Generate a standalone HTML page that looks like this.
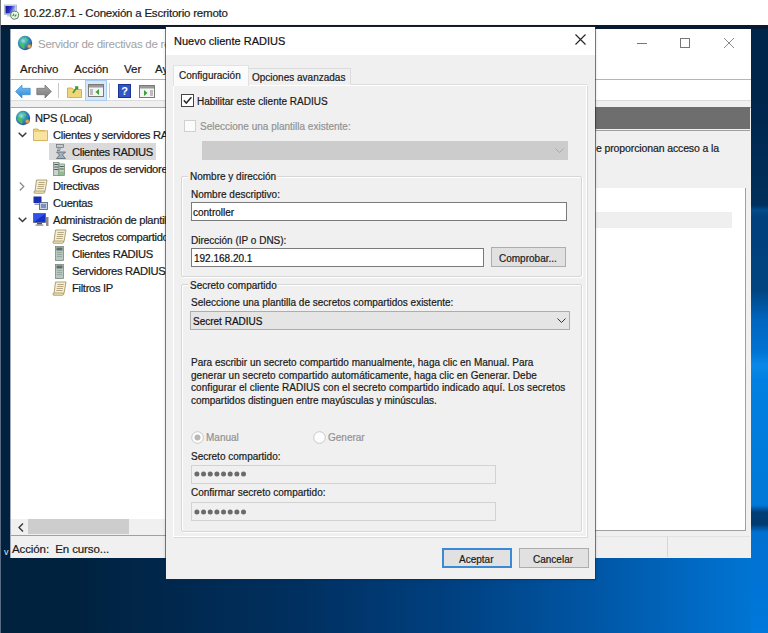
<!DOCTYPE html>
<html><head><meta charset="utf-8">
<style>
*{margin:0;padding:0;box-sizing:border-box}
html,body{width:768px;height:633px;overflow:hidden}
body{position:relative;font-family:"Liberation Sans",sans-serif;color:#000;background:#06234a}
.a{position:absolute}
.t{position:absolute;white-space:nowrap;line-height:12px;font-size:10px;color:#1a1a1a;-webkit-text-stroke-width:0.2px}
.m{font-size:11.2px;letter-spacing:-0.32px;color:#1a1a1a}
#desk1{left:0;top:25px;width:768px;height:608px;
 background:linear-gradient(90deg,#00223f 0%,#00223f 10%,#003060 39%,#004080 58.6%,#0058a8 78.8%,#0078d8 100%)}
#deskR{left:751px;top:25px;width:17px;height:608px;
 background:linear-gradient(180deg,#00264c 0%,#00264c 12.3%,#00305c 29.6%,#004c8c 30.4%,#00407c 31.7%,#004480 43.6%,#0066c0 48.5%,#0072d2 53.5%,#0a88e8 55.9%,#0080e2 58.4%,#0078d8 79%,#003e78 80.1%,#003a70 82.1%,#0070d0 83.4%,#0078dc 100%)}
#topbar{left:0;top:0;width:768px;height:25px;background:#fff;border-left:1px solid #7a7a7a}
#topline{left:0;top:25px;width:768px;height:4px;background:#081a33}
#mmc{left:10px;top:29px;width:741px;height:529px;background:#f0f0f0}
</style></head><body>
<div id="desk1" class="a"></div>
<div id="deskR" class="a"></div>
<div id="topbar" class="a">
  <svg class="a" style="left:0;top:0" width="21" height="22" viewBox="0 0 21 22">
    <defs><linearGradient id="rs" x1="0" y1="0" x2="1" y2="0.3"><stop offset="0" stop-color="#0c0c9a"/><stop offset="0.55" stop-color="#2a36c8"/><stop offset="1" stop-color="#b9c2f2"/></linearGradient></defs>
    <rect x="3.5" y="5" width="12" height="9.5" fill="#d6dbe8" stroke="#a8b0c4" stroke-width="0.8"/>
    <rect x="4.5" y="6" width="10" height="7.5" fill="url(#rs)"/>
    <rect x="6" y="14.5" width="5" height="2" fill="#c4c8d4"/>
    <circle cx="13.7" cy="15.2" r="4" fill="#eaf5e4" stroke="#5f7f5f" stroke-width="1"/>
    <path d="M11.6 15.9 l1.4 -1.4 M13.6 16.4 l1.8 -1.8 M12.2 14.4 h1 M14.6 16.2 h-1" stroke="#2f8f2f" stroke-width="1.1"/>
  </svg>
  <div class="t" style="left:22.5px;top:7px;font-size:11.5px;line-height:13px;letter-spacing:-0.21px;color:#1c1c1c">10.22.87.1 - Conexión a Escritorio remoto</div>
</div>
<div id="topline" class="a"></div>
<div class="a" style="left:0;top:25px;width:1px;height:608px;background:#5a6a80"></div>
<div class="a" style="left:10px;top:29px;width:1px;height:529px;background:#a3abbb;z-index:5"></div>

<!-- MMC window -->
<div id="mmc" class="a">
  <!-- title bar -->
  <div class="a" style="left:0;top:0;width:741px;height:28px;background:#fff"></div>
  <svg class="a" style="left:7px;top:6px" width="16" height="16" viewBox="0 0 16 16">
    <defs><radialGradient id="gl" cx="0.38" cy="0.35" r="0.75"><stop offset="0" stop-color="#9fe6d8"/><stop offset="0.35" stop-color="#3aa6a8"/><stop offset="0.7" stop-color="#2a6fb8"/><stop offset="1" stop-color="#1f3f80"/></radialGradient></defs>
    <circle cx="8" cy="8" r="7.2" fill="url(#gl)"/>
    <path d="M2.5 8 q2 -1 4 1 q2 2 1 5 q-3 -1 -5 -4z" fill="#4fbf5a" opacity="0.9"/><path d="M8 2 q3 1 3 4 q-2 0 -3 -2z" fill="#5fcf7a" opacity="0.7"/>
    <circle cx="12.3" cy="11.3" r="2.1" fill="#d8a860" stroke="#8a6a40" stroke-width="0.6"/>
  </svg>
  <div class="t m" style="left:28px;top:8.5px;color:#a2a2a2;font-size:11.5px;letter-spacing:-0.28px;-webkit-text-stroke-width:0">Servidor de directivas de redes</div>
  <div class="a" style="left:627px;top:14px;width:10px;height:1px;background:#777"></div>
  <div class="a" style="left:670px;top:9px;width:10px;height:10px;border:1px solid #777"></div>
  <svg class="a" style="left:714px;top:9px" width="10" height="10" viewBox="0 0 10 10"><path d="M0 0L10 10M10 0L0 10" stroke="#8a8a8a" stroke-width="1"/></svg>
  <!-- menubar -->
  <div class="a" style="left:0;top:28px;width:741px;height:22px;background:#fff"></div>
  <div class="t m" style="left:10px;top:34px;font-size:11.5px;letter-spacing:0">Archivo</div>
  <div class="t m" style="left:64px;top:34px;font-size:11.5px;letter-spacing:0">Acción</div>
  <div class="t m" style="left:114px;top:34px;font-size:11.5px;letter-spacing:0">Ver</div>
  <div class="t m" style="left:145px;top:34px;font-size:11.5px;letter-spacing:0">Ayuda</div>
  <div class="a" style="left:0;top:50px;width:741px;height:1px;background:#b5b5b5"></div>
  <!-- toolbar -->
  <div class="a" style="left:0;top:51px;width:741px;height:21px;background:#fff"></div>
  <div class="a" style="left:0;top:71px;width:741px;height:1px;background:#dcdcdc"></div>
  <svg class="a" style="left:5px;top:55px" width="16" height="15" viewBox="0 0 16 15"><defs><linearGradient id="ab" x1="0" y1="0" x2="0" y2="1"><stop offset="0" stop-color="#7cc4f4"/><stop offset="1" stop-color="#2a86d6"/></linearGradient></defs><path d="M0.6 7.5 L7 1 V4.3 H15.2 V10.7 H7 V14 Z" fill="url(#ab)" stroke="#3a8ad0" stroke-width="0.7" stroke-linejoin="round"/></svg>
  <svg class="a" style="left:26px;top:55px" width="16" height="15" viewBox="0 0 16 15"><defs><linearGradient id="ag" x1="0" y1="0" x2="0" y2="1"><stop offset="0" stop-color="#a8a8a8"/><stop offset="1" stop-color="#7a7a7a"/></linearGradient></defs><path d="M15.4 7.5 L9 1 V4.3 H0.8 V10.7 H9 V14 Z" fill="url(#ag)" stroke="#6e6e6e" stroke-width="0.7" stroke-linejoin="round"/></svg>
  <div class="a" style="left:48px;top:54px;width:1px;height:15px;background:#c8c8c8"></div>
  <svg class="a" style="left:57px;top:55px" width="15" height="14" viewBox="0 0 15 14"><path d="M0.5 4 H5 L6.5 5.5 H14.5 V13.5 H0.5Z" fill="#f2d479" stroke="#c9a540" stroke-width="0.8"/><path d="M6 9 L10 3 M8 3 H10.5 V5.5" stroke="#3a9a3a" stroke-width="1.6" fill="none"/></svg>
  <div class="a" style="left:75px;top:51px;width:22px;height:21px;background:#d6e8f8;border:1px solid #a8cdf0"></div>
  <svg class="a" style="left:78px;top:55px" width="16" height="13" viewBox="0 0 16 13"><rect x="0.5" y="0.5" width="15" height="12" fill="#f4f4f4" stroke="#7a7a7a"/><rect x="1" y="1" width="14" height="2.5" fill="#9a9a9a"/><rect x="2" y="5" width="3" height="6" fill="#bcbcbc"/><path d="M11 5 L7.5 8 L11 11Z" fill="#3aa03a"/></svg>
  <div class="a" style="left:99px;top:54px;width:1px;height:15px;background:#c8c8c8"></div>
  <svg class="a" style="left:108px;top:55px" width="13" height="14" viewBox="0 0 13 14"><rect x="0.5" y="0.5" width="12" height="13" fill="#2f55c8" stroke="#1d3590"/><text x="6.5" y="11" font-size="11" font-family="Liberation Sans" font-weight="bold" fill="#fff" text-anchor="middle">?</text></svg>
  <svg class="a" style="left:129px;top:56px" width="16" height="13" viewBox="0 0 16 13"><rect x="0.5" y="0.5" width="15" height="12" fill="#f4f4f4" stroke="#7a7a7a"/><rect x="1" y="1" width="14" height="2.5" fill="#9a9a9a"/><rect x="11" y="5" width="3" height="6" fill="#bcbcbc"/><path d="M5 5 L8.5 8 L5 11Z" fill="#3aa03a"/></svg>
  <div class="a" style="left:0;top:72px;width:741px;height:6px;background:#f0f0f0"></div>
  <div class="a" style="left:0;top:78px;width:741px;height:1px;background:#a8a8a8"></div>

  <!-- tree pane -->
  <div class="a" style="left:1px;top:79px;width:155px;height:411px;background:#fff"></div>
  <!-- result pane (visible on the right) -->
  <div class="a" style="left:156px;top:72px;width:585px;height:6px;background:#f0f0f0"></div>
  <div class="a" style="left:156px;top:71px;width:585px;height:1px;background:#dcdcdc"></div>
  <div class="a" style="left:156px;top:78px;width:584px;height:22px;background:#6e6e6e"></div>
  <div class="a" style="left:156px;top:101px;width:584px;height:1px;background:#a0a0a0"></div>
  <div class="a" style="left:156px;top:102px;width:584px;height:57px;background:#f0f0f0"></div>
  <div class="t m" style="left:586px;top:113px;font-size:10.5px;letter-spacing:-0.12px">e proporcionan acceso a la</div>
  <div class="a" style="left:156px;top:159px;width:579px;height:342px;background:#fff"></div>
  <div class="a" style="left:156px;top:183px;width:566px;height:16px;background:#efefef"></div>
  <div class="a" style="left:735px;top:159px;width:1px;height:342px;background:#a0a0a0"></div>
  <div class="a" style="left:156px;top:501px;width:580px;height:1px;background:#a0a0a0"></div>

  <!-- tree items -->
  <svg class="a" style="left:5px;top:81px" width="16" height="16" viewBox="0 0 16 16">
    <circle cx="8" cy="8" r="7.2" fill="url(#gl)"/>
    <path d="M2.5 8 q2 -1 4 1 q2 2 1 5 q-3 -1 -5 -4z" fill="#4fbf5a" opacity="0.9"/><path d="M8 2 q3 1 3 4 q-2 0 -3 -2z" fill="#5fcf7a" opacity="0.7"/>
    <circle cx="12.3" cy="11.3" r="2.1" fill="#d8a860" stroke="#8a6a40" stroke-width="0.6"/>
  </svg>
  <div class="t m" style="left:25px;top:83px">NPS (Local)</div>

  <svg class="a" style="left:8px;top:103px" width="9" height="6" viewBox="0 0 9 6"><path d="M0.7 0.7 L4.5 4.5 L8.3 0.7" stroke="#3a3a3a" stroke-width="1.5" fill="none"/></svg>
  <svg class="a" style="left:23px;top:99px" width="15" height="13" viewBox="0 0 15 13"><path d="M0.5 1 H5 L6.5 2.5 H14.5 V12.5 H0.5Z" fill="#eccb6a" stroke="#cfa848" stroke-width="0.8"/><rect x="1" y="4" width="13" height="8" fill="#f9e3a0"/><path d="M8.5 1.5 H13 V3.5" stroke="#fff" stroke-width="0.8" fill="none"/></svg>
  <div class="t m" style="left:43px;top:100px">Clientes y servidores RADIUS</div>

  <div class="a" style="left:39px;top:114px;width:107px;height:17px;background:#dadada"></div>
  <svg class="a" style="left:45px;top:115px" width="12" height="16" viewBox="0 0 12 16"><rect x="1.5" y="0.5" width="7" height="3" fill="#c0c8d0" stroke="#6a7078" stroke-width="0.7"/><path d="M2 5 H6 M2 6.5 H5" stroke="#6a7078" stroke-width="0.8"/><path d="M1.5 8 H10.5 L7.5 11 L10.5 14.5 H1.5 L4.5 11Z" fill="#9cb0c0" stroke="#505a66" stroke-width="0.7"/></svg>
  <div class="t m" style="left:62px;top:117px">Clientes RADIUS</div>

  <svg class="a" style="left:43px;top:133px" width="12" height="14" viewBox="0 0 12 14"><rect x="0.5" y="0.5" width="5.5" height="13" fill="#c8d4cc" stroke="#6a7a70" stroke-width="0.7"/><rect x="6" y="2" width="5.5" height="11.5" fill="#c4d8c0" stroke="#6a7a70" stroke-width="0.7"/><path d="M1.2 2.5H5.3M1.2 5H5.3M1.2 7.5H5.3M6.7 4.5H10.8M6.7 7H10.8" stroke="#4f5f58" stroke-width="1"/><rect x="6.5" y="9.5" width="4.5" height="3.5" fill="#8fbf8a"/></svg>
  <div class="t m" style="left:62px;top:134px">Grupos de servidores RADIUS</div>

  <svg class="a" style="left:9px;top:153px" width="6" height="9" viewBox="0 0 6 9"><path d="M0.8 0.5 L4.8 4.5 L0.8 8.5" stroke="#888" stroke-width="1.2" fill="none"/></svg>
  <svg class="a" style="left:23px;top:150px" width="15" height="15" viewBox="0 0 15 15"><path d="M3.5 1 H14 L12 12.5 H2 Z" fill="#f6eed0" stroke="#9a8a5a" stroke-width="0.8"/><path d="M1 14 Q0.3 12 2.2 12 H11.5 Q12.5 14 10.5 14.3 H1.5Z" fill="#ece0b0" stroke="#9a8a5a" stroke-width="0.7"/><path d="M5.5 3.5H11.8M5.1 5.5H11.4M4.7 7.5H11M4.3 9.5H10.6" stroke="#9a8a60" stroke-width="0.7"/></svg>
  <div class="t m" style="left:43px;top:151px">Directivas</div>

  <svg class="a" style="left:23px;top:167px" width="15" height="14" viewBox="0 0 15 14"><rect x="0.5" y="0.5" width="8" height="6.5" fill="#1a2fb0"/><rect x="1.5" y="7.5" width="5" height="1.5" fill="#9aa0aa"/><rect x="6.5" y="6.5" width="8" height="7" fill="#c4d0e4" stroke="#4a5a78" stroke-width="0.8"/><rect x="8" y="8" width="5" height="4" fill="#7a90b8"/></svg>
  <div class="t m" style="left:43px;top:168px">Cuentas</div>

  <svg class="a" style="left:8px;top:188px" width="9" height="6" viewBox="0 0 9 6"><path d="M0.7 0.7 L4.5 4.5 L8.3 0.7" stroke="#3a3a3a" stroke-width="1.5" fill="none"/></svg>
  <svg class="a" style="left:23px;top:184px" width="16" height="14" viewBox="0 0 16 14"><rect x="0.5" y="0.5" width="12" height="9" fill="#1530d0" stroke="#404858" stroke-width="0.6"/><path d="M1 1 H12 L1 9Z" fill="#4a70f8" opacity="0.55"/><rect x="4" y="10" width="5" height="1.5" fill="#555"/><rect x="2.5" y="11.5" width="8" height="1.2" fill="#888"/><rect x="13" y="4" width="2.5" height="9" fill="#8a8a8a"/></svg>
  <div class="t m" style="left:43px;top:185px">Administración de plantillas</div>

  <svg class="a" style="left:41px;top:200px" width="16" height="15" viewBox="0 0 16 15"><path d="M4.5 1 H15 L13 12.5 H3 Z" fill="#f6eed0" stroke="#9a8a5a" stroke-width="0.8"/><path d="M2 14 Q1.3 12 3.2 12 H12.5 Q13.5 14 11.5 14.3 H2.5Z" fill="#ece0b0" stroke="#9a8a5a" stroke-width="0.7"/><path d="M6.5 3.5H12.8M6.1 5.5H12.4M5.7 7.5H12M5.3 9.5H11.6" stroke="#9a8a60" stroke-width="0.7"/></svg>
  <div class="t m" style="left:62px;top:202px">Secretos compartidos</div>

  <svg class="a" style="left:45px;top:217px" width="9" height="15" viewBox="0 0 9 15"><rect x="0.5" y="0.5" width="8" height="14" fill="#b8c8c0" stroke="#6a7a72" stroke-width="0.7"/><rect x="1.5" y="1.5" width="6" height="3" fill="#5f6f69"/><path d="M2 6.5H7M2 8.5H7M2 10.5H7" stroke="#8a9a92" stroke-width="0.7"/></svg>
  <div class="t m" style="left:62px;top:219px">Clientes RADIUS</div>

  <svg class="a" style="left:45px;top:235px" width="9" height="15" viewBox="0 0 9 15"><rect x="0.5" y="0.5" width="8" height="14" fill="#b8c8c0" stroke="#6a7a72" stroke-width="0.7"/><rect x="1.5" y="1.5" width="6" height="3" fill="#5f6f69"/><path d="M2 6.5H7M2 8.5H7M2 10.5H7" stroke="#8a9a92" stroke-width="0.7"/></svg>
  <div class="t m" style="left:62px;top:236px">Servidores RADIUS</div>

  <svg class="a" style="left:41px;top:252px" width="16" height="15" viewBox="0 0 16 15"><path d="M4.5 1 H15 L13 12.5 H3 Z" fill="#f6eed0" stroke="#9a8a5a" stroke-width="0.8"/><path d="M2 14 Q1.3 12 3.2 12 H12.5 Q13.5 14 11.5 14.3 H2.5Z" fill="#ece0b0" stroke="#9a8a5a" stroke-width="0.7"/><path d="M6.5 3.5H12.8M6.1 5.5H12.4M5.7 7.5H12M5.3 9.5H11.6" stroke="#9a8a60" stroke-width="0.7"/></svg>
  <div class="t m" style="left:62px;top:253px">Filtros IP</div>

  <!-- horizontal scrollbar -->
  <div class="a" style="left:1px;top:490px;width:155px;height:16px;background:#f0f0f0"></div>
  <svg class="a" style="left:8px;top:494px" width="6" height="9" viewBox="0 0 6 9"><path d="M5 0.5 L1 4.5 L5 8.5" stroke="#333" stroke-width="1.3" fill="none"/></svg>
  <div class="a" style="left:18px;top:490px;width:101px;height:15px;background:#cdcdcd"></div>
  <div class="a" style="left:0;top:506px;width:156px;height:1px;background:#a0a0a0"></div>
  <!-- status bar -->
  <div class="a" style="left:0;top:507px;width:741px;height:22px;background:#f0f0f0"></div>
  <div class="a" style="left:156px;top:507px;width:584px;height:1px;background:#e2e2e2"></div>
  <div class="a" style="left:657px;top:508px;width:1px;height:20px;background:#d6d6d6"></div>
  <div class="t m" style="left:2px;top:514px;font-size:11.5px;letter-spacing:-0.1px">Acción:&nbsp; En curso...</div>
</div>

<div class="t" style="left:4px;top:546px;font-size:9px;color:#dfe6ee;-webkit-text-stroke-width:0">v</div>
<!-- Dialog -->
<div class="a" style="left:165px;top:26px;width:431px;height:554px;background:#f0f0f0;border:1px solid rgba(40,40,40,0.6);background-clip:padding-box;box-shadow:0 0 3px rgba(0,0,0,0.12)"></div>
<div class="a" style="left:166px;top:27px;width:429px;height:28px;background:#fff"></div>
<div class="t" style="left:174px;top:35px;font-size:11px;line-height:12px;color:#111">Nuevo cliente RADIUS</div>
<svg class="a" style="left:575px;top:34px" width="11" height="11" viewBox="0 0 11 11"><path d="M0.5 0.5L10.5 10.5M10.5 0.5L0.5 10.5" stroke="#222" stroke-width="1.1"/></svg>
<!-- tab panel -->
<div class="a" style="left:173px;top:85px;width:414px;height:452px;background:#f0f0f0;border:1px solid #fff;box-shadow:0 -1px 0 #dedede,1px 1px 0 #dadada"></div>
<div class="a" style="left:248px;top:68px;width:103px;height:17px;background:#f0f0f0;border:1px solid #dcdcdc;border-bottom:none"></div>
<div class="a" style="left:173px;top:65px;width:76px;height:21px;background:#fbfbfb;border:1px solid #e2e2e2;border-bottom:none"></div>
<div class="t" style="left:179px;top:70px">Configuración</div>
<div class="t" style="left:252px;top:72px">Opciones avanzadas</div>
<!-- checkbox enabled -->
<div class="a" style="left:181px;top:94px;width:13px;height:13px;background:#fff;border:1px solid #444"></div>
<svg class="a" style="left:182px;top:95px" width="11" height="11" viewBox="0 0 11 11"><path d="M1.8 5.2 L4.3 8 L9.4 2.2" stroke="#2a2a2a" stroke-width="1.5" fill="none"/></svg>
<div class="t" style="left:197px;top:95.5px">Habilitar este cliente RADIUS</div>
<!-- checkbox disabled -->
<div class="a" style="left:184px;top:120px;width:12px;height:12px;background:#fbfbfb;border:1px solid #d0d0d0"></div>
<div class="t" style="left:200px;top:121px;color:#939393">Seleccione una plantilla existente:</div>
<div class="a" style="left:202px;top:141px;width:366px;height:19px;background:#cccccc"></div>
<svg class="a" style="left:555px;top:148px" width="9" height="5" viewBox="0 0 9 5"><path d="M0.5 0.5 L4.5 4.5 L8.5 0.5" stroke="#a8a8a8" stroke-width="1" fill="none"/></svg>
<!-- groupbox 1 -->
<div class="a" style="left:181px;top:176px;width:401px;height:101px;border:1px solid #d6d6d6;box-shadow:inset 1px 1px 0 #fff,1px 1px 0 #fff;border-radius:2px"></div>
<div class="a" style="left:188px;top:170px;width:89px;height:12px;background:#f0f0f0"></div>
<div class="t" style="left:190px;top:171px">Nombre y dirección</div>
<div class="t" style="left:191px;top:189px">Nombre descriptivo:</div>
<div class="a" style="left:191px;top:202px;width:376px;height:19px;background:#fff;border:1px solid #7a7a7a"></div>
<div class="t" style="left:193px;top:207px;color:#111">controller</div>
<div class="t" style="left:191px;top:235px">Dirección (IP o DNS):</div>
<div class="a" style="left:191px;top:248px;width:293px;height:19px;background:#fff;border:1px solid #7a7a7a"></div>
<div class="t" style="left:194px;top:253px;color:#111">192.168.20.1</div>
<div class="a" style="left:491px;top:247px;width:75px;height:20px;background:#e1e1e1;border:1px solid #adadad"></div>
<div class="t" style="left:499px;top:253px">Comprobar...</div>
<!-- groupbox 2 -->
<div class="a" style="left:181px;top:284px;width:401px;height:248px;border:1px solid #d6d6d6;box-shadow:inset 1px 1px 0 #fff,1px 1px 0 #fff;border-radius:2px"></div>
<div class="a" style="left:188px;top:278px;width:89px;height:12px;background:#f0f0f0"></div>
<div class="t" style="left:190px;top:280px">Secreto compartido</div>
<div class="t" style="left:191px;top:297px">Seleccione una plantilla de secretos compartidos existente:</div>
<div class="a" style="left:190px;top:311px;width:380px;height:19px;background:#e5e5e5;border:1px solid #adadad"></div>
<div class="t" style="left:193px;top:316px;color:#111">Secret RADIUS</div>
<svg class="a" style="left:557px;top:318px" width="9" height="5" viewBox="0 0 9 5"><path d="M0.5 0.5 L4.5 4.5 L8.5 0.5" stroke="#333" stroke-width="1" fill="none"/></svg>
<div class="t" style="left:191px;top:357px">Para escribir un secreto compartido manualmente, haga clic en Manual. Para</div>
<div class="t" style="left:191px;top:369.5px;letter-spacing:0.04px">generar un secreto compartido automáticamente, haga clic en Generar. Debe</div>
<div class="t" style="left:191px;top:382px;letter-spacing:0.065px">configurar el cliente RADIUS con el secreto compartido indicado aquí. Los secretos</div>
<div class="t" style="left:191px;top:394.5px;letter-spacing:-0.03px">compartidos distinguen entre mayúsculas y minúsculas.</div>
<!-- radios -->
<svg class="a" style="left:191px;top:431px" width="13" height="13" viewBox="0 0 13 13"><circle cx="6.5" cy="6.5" r="5.8" fill="#fdfdfd" stroke="#c8c8c8"/><circle cx="6.5" cy="6.5" r="3" fill="#b8b8b8"/></svg>
<div class="t" style="left:206px;top:432px;color:#939393">Manual</div>
<svg class="a" style="left:313px;top:431px" width="13" height="13" viewBox="0 0 13 13"><circle cx="6.5" cy="6.5" r="5.8" fill="#fdfdfd" stroke="#c8c8c8"/></svg>
<div class="t" style="left:328px;top:432px;color:#939393">Generar</div>
<div class="t" style="left:191px;top:451px">Secreto compartido:</div>
<div class="a" style="left:191px;top:465px;width:305px;height:19px;background:#f0f0f0;border:1px solid #d2d2d2"></div>
<svg class="a" style="left:191px;top:470px" width="60" height="8" viewBox="0 0 60 8"><circle cx="5.90" cy="4" r="2.5" fill="#6b6b6b"/><circle cx="12.56" cy="4" r="2.5" fill="#6b6b6b"/><circle cx="19.22" cy="4" r="2.5" fill="#6b6b6b"/><circle cx="25.88" cy="4" r="2.5" fill="#6b6b6b"/><circle cx="32.54" cy="4" r="2.5" fill="#6b6b6b"/><circle cx="39.20" cy="4" r="2.5" fill="#6b6b6b"/><circle cx="45.86" cy="4" r="2.5" fill="#6b6b6b"/><circle cx="52.52" cy="4" r="2.5" fill="#6b6b6b"/></svg>
<div class="t" style="left:191px;top:487px">Confirmar secreto compartido:</div>
<div class="a" style="left:191px;top:502px;width:305px;height:19px;background:#f0f0f0;border:1px solid #d2d2d2"></div>
<svg class="a" style="left:191px;top:508px" width="60" height="8" viewBox="0 0 60 8"><circle cx="5.90" cy="4" r="2.5" fill="#6b6b6b"/><circle cx="12.56" cy="4" r="2.5" fill="#6b6b6b"/><circle cx="19.22" cy="4" r="2.5" fill="#6b6b6b"/><circle cx="25.88" cy="4" r="2.5" fill="#6b6b6b"/><circle cx="32.54" cy="4" r="2.5" fill="#6b6b6b"/><circle cx="39.20" cy="4" r="2.5" fill="#6b6b6b"/><circle cx="45.86" cy="4" r="2.5" fill="#6b6b6b"/><circle cx="52.52" cy="4" r="2.5" fill="#6b6b6b"/></svg>
<!-- buttons -->
<div class="a" style="left:442px;top:548px;width:70px;height:20px;background:#e1e1e1;border:2px solid #3c8ad6"></div>
<div class="t" style="left:459px;top:554px">Aceptar</div>
<div class="a" style="left:519px;top:548px;width:70px;height:20px;background:#e1e1e1;border:1px solid #adadad"></div>
<div class="t" style="left:533px;top:554px">Cancelar</div>
</body></html>
